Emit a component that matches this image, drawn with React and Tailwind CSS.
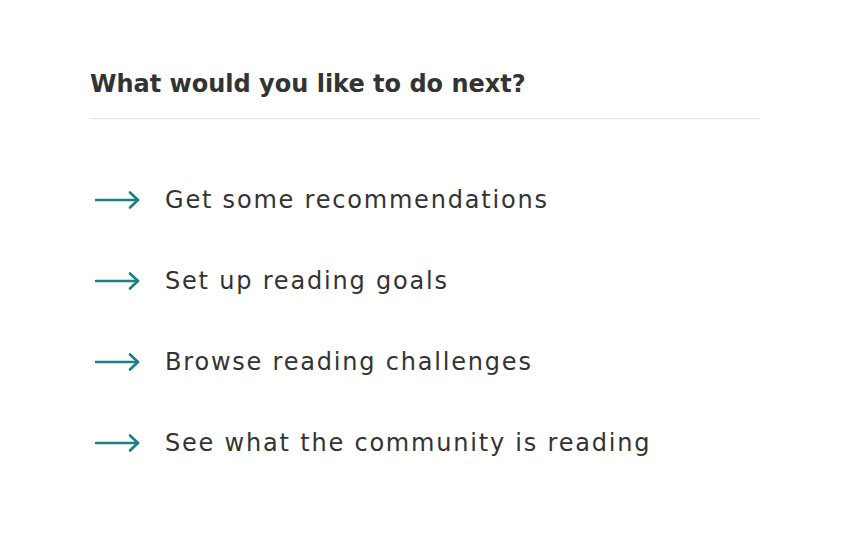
const ITEMS = [
  'Get some recommendations',
  'Set up reading goals',
  'Browse reading challenges',
  'See what the community is reading',
]

function Arrow() {
  return (
    <svg width="46" height="20" viewBox="0 0 46 20" fill="none" className="shrink-0">
      <path d="M1 10H43" stroke="#1b7f87" strokeWidth="2.6" strokeLinecap="round" />
      <path d="M35 2.5L43 10L35 17.5" stroke="#1b7f87" strokeWidth="2.6" strokeLinecap="round" strokeLinejoin="round" />
    </svg>
  )
}

export default function App() {
  return (
    <div className="w-[850px] h-[549px] bg-white font-['DejaVu_Sans',sans-serif] text-[#333333]">
      <div className="pl-[90px] pr-[90px] pt-[64px]">
        <h2 className="text-[24px] font-bold leading-[40px] pb-[14px] border-b border-[#e4e4e4]">
          What would you like to do next?
        </h2>
        <ul className="flex flex-col gap-[45px] mt-[63px]">
          {ITEMS.map((t) => (
            <li key={t} className="flex items-center gap-[24px] h-[36px] pl-[5px] cursor-pointer">
              <Arrow />
              <span className="text-[24px] leading-[36px] tracking-[1.8px]">{t}</span>
            </li>
          ))}
        </ul>
      </div>
    </div>
  )
}
